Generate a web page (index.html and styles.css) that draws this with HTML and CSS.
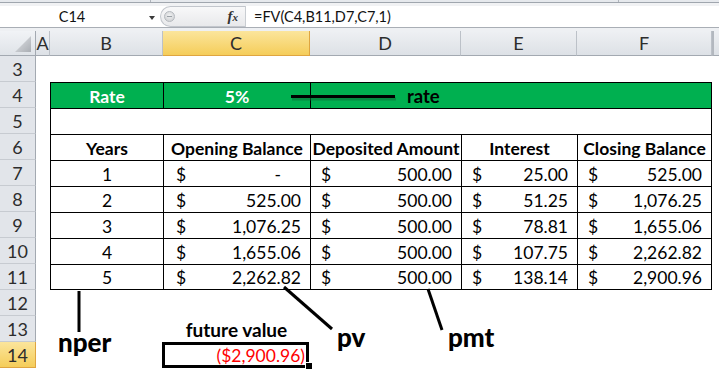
FILE: index.html
```html
<!DOCTYPE html>
<html>
<head>
<meta charset="utf-8">
<title>FV example</title>
<link rel="stylesheet" href="styles.css">
</head>
<body>
<div class="app">
  <div class="ribbon-edge"><div class="seg s1"></div><div class="seg s2"></div></div>
  <div class="formula-bar">
    <div class="name-box"><span class="name">C14</span><span class="dd"></span></div>
    <div class="fx-area"><span class="knob"><span class="dash"></span></span><span class="fx"><i>f</i><i class="fx-x">x</i></span></div>
    <div class="formula">=FV(C4,B11,D7,C7,1)</div>
  </div>
  <div class="bar-gap"></div>

  <div class="sheet">
    <div class="row">
      <div class="corner"><svg width="16" height="16" viewBox="0 0 16 16"><defs><linearGradient id="tg" x1="0" y1="0" x2="1" y2="1"><stop offset="0" stop-color="#e4e6e9"/><stop offset="1" stop-color="#a9adb3"/></linearGradient></defs><polygon points="16,0 16,16 0,16" fill="url(#tg)"/></svg></div>
      <div class="ch">A</div><div class="ch">B</div><div class="ch sel">C</div><div class="ch">D</div><div class="ch">E</div><div class="ch">F</div><div class="ch end"></div>
    </div>

    <div class="row"><div class="rh">3</div><div class="cell span7"></div></div>

    <div class="row">
      <div class="rh">4</div><div class="cell"></div>
      <div class="tb green ctr b white">Rate</div>
      <div class="tb green ctr b white">5%</div>
      <div class="tb last green lead b span3">rate</div>
      <div class="cell"></div>
    </div>

    <div class="row">
      <div class="rh">5</div><div class="cell"></div>
      <div class="tb last span5"></div>
      <div class="cell"></div>
    </div>

    <div class="row">
      <div class="rh">6</div><div class="cell"></div>
      <div class="tb ctr b">Years</div>
      <div class="tb ctr b">Opening Balance</div>
      <div class="tb ctr b">Deposited Amount</div>
      <div class="tb ctr b">Interest</div>
      <div class="tb last ctr b">Closing Balance</div>
      <div class="cell"></div>
    </div>

    <div class="row">
      <div class="rh">7</div><div class="cell"></div>
      <div class="tb ctr">1</div>
      <div class="tb acct col-c"><span>$</span><span class="dash-val">-</span></div>
      <div class="tb acct"><span>$</span><span>500.00</span></div>
      <div class="tb acct"><span>$</span><span>25.00</span></div>
      <div class="tb last acct"><span>$</span><span>525.00</span></div>
      <div class="cell"></div>
    </div>

    <div class="row">
      <div class="rh">8</div><div class="cell"></div>
      <div class="tb ctr">2</div>
      <div class="tb acct col-c"><span>$</span><span>525.00</span></div>
      <div class="tb acct"><span>$</span><span>500.00</span></div>
      <div class="tb acct"><span>$</span><span>51.25</span></div>
      <div class="tb last acct"><span>$</span><span>1,076.25</span></div>
      <div class="cell"></div>
    </div>

    <div class="row">
      <div class="rh">9</div><div class="cell"></div>
      <div class="tb ctr">3</div>
      <div class="tb acct col-c"><span>$</span><span>1,076.25</span></div>
      <div class="tb acct"><span>$</span><span>500.00</span></div>
      <div class="tb acct"><span>$</span><span>78.81</span></div>
      <div class="tb last acct"><span>$</span><span>1,655.06</span></div>
      <div class="cell"></div>
    </div>

    <div class="row">
      <div class="rh">10</div><div class="cell"></div>
      <div class="tb ctr">4</div>
      <div class="tb acct col-c"><span>$</span><span>1,655.06</span></div>
      <div class="tb acct"><span>$</span><span>500.00</span></div>
      <div class="tb acct"><span>$</span><span>107.75</span></div>
      <div class="tb last acct"><span>$</span><span>2,262.82</span></div>
      <div class="cell"></div>
    </div>

    <div class="row">
      <div class="rh">11</div><div class="cell"></div>
      <div class="tb bot ctr">5</div>
      <div class="tb bot acct col-c"><span>$</span><span>2,262.82</span></div>
      <div class="tb bot acct"><span>$</span><span>500.00</span></div>
      <div class="tb bot acct"><span>$</span><span>138.14</span></div>
      <div class="tb bot last acct"><span>$</span><span>2,900.96</span></div>
      <div class="cell"></div>
    </div>

    <div class="row"><div class="rh">12</div><div class="cell span7"></div></div>

    <div class="row">
      <div class="rh">13</div><div class="cell span2"></div>
      <div class="fv-label b">future value</div>
      <div class="cell span4"></div>
    </div>

    <div class="row">
      <div class="rh sel">14</div><div class="cell span2"></div>
      <div class="selcell">($2,900.96)</div>
      <div class="cell span4"></div>
    </div>
  </div>

  <svg class="overlay" width="719" height="375" viewBox="0 0 719 375">
    <line x1="292" y1="99" x2="396" y2="99" stroke="#0b6b34" stroke-opacity="0.55" stroke-width="3"/>
    <line x1="291" y1="96.5" x2="395" y2="96.5" stroke="#000" stroke-width="3"/>
    <line x1="79" y1="291" x2="79" y2="332" stroke="#000" stroke-width="3"/>
    <line x1="284" y1="287" x2="332" y2="329" stroke="#000" stroke-width="3"/>
    <line x1="428" y1="289" x2="442" y2="330" stroke="#000" stroke-width="3"/>
  </svg>
  <div class="note nper">nper</div>
  <div class="note pv">pv</div>
  <div class="note pmt">pmt</div>
</div>
</body>
</html>
```
FILE: styles.css
```css
* { box-sizing: border-box; margin: 0; padding: 0; }
html, body { width: 719px; height: 375px; overflow: hidden; background: #fff; }
body { font-family: Lato, "Liberation Sans", sans-serif; color: #000; }
.app { position: relative; width: 719px; height: 375px; }

/* ribbon remnant */
.ribbon-edge {
  display: flex; height: 6px;
  background: linear-gradient(#e6e9ed 0 2px, #a0a6ae 2px 3px, #f1f2f4 3px 6px);
}
.seg { height: 2px; border-right: 1px solid #b0b5bc; }
.s1 { width: 151px; }
.s2 { width: 468px; }

/* formula bar */
.formula-bar { display: flex; height: 22px; background: #fff; border-bottom: 1px solid #a9aeb5; }
.name-box { width: 158px; display: flex; align-items: center; font-size: 14.5px; color: #111; }
.name { width: 144px; text-align: center; }
.dd { width: 0; height: 0; margin-left: 5px; margin-top: 2px; border-left: 3.5px solid transparent; border-right: 3.5px solid transparent; border-top: 4px solid #3a3a3a; }
.fx-area {
  width: 85px; margin-left: 2px; display: flex; align-items: center;
  background: linear-gradient(#f8f8f9, #e8e9eb);
  border: 1px solid #c2c6cc; border-right: none; border-radius: 11px 0 0 11px;
}
.knob {
  width: 11px; height: 11px; margin-left: 3px; border-radius: 50%;
  background: radial-gradient(circle at 50% 40%, #f0f1f2, #c9cbce);
  border: 1px solid #b5b9be; display: flex; align-items: center; justify-content: center;
}
.dash { width: 5px; height: 1px; background: #9aa0a6; }
.fx { margin-left: auto; margin-right: 7px; font-family: "Liberation Serif", serif; font-weight: 700; font-size: 15px; color: #333; }
.fx-x { font-size: 11px; }
.formula { flex: 1; display: flex; align-items: center; padding-left: 8px; font-size: 14.5px; color: #111; border-left: 1px solid #c9cdd2; }
.bar-gap { height: 3px; background: #eef0f3; }

/* sheet grid */
.sheet {
  display: grid;
  grid-template-columns: 36px 14px 113px 147px 151px 116px 135px 1fr;
  grid-template-rows: 25px repeat(12, 26px);
  font-size: 17.5px;
}
.row { display: contents; }
.corner {
  background: linear-gradient(#f1f3f6, #dfe3e8);
  border-right: 1px solid #a3a9b1; border-bottom: 1px solid #a3a9b1;
  display: flex; justify-content: flex-end; align-items: flex-end; padding: 0 4px 3px 0;
}
.ch {
  background: linear-gradient(#eef0f3, #dde1e6);
  border-right: 1px solid #bcc1c8; border-bottom: 1px solid #a3a9b1;
  display: flex; align-items: center; justify-content: center; color: #2d2d2d; font-size: 18px;
}
.ch.end { border-left: 2px solid #b3b8bf; border-right: none; }
.rh {
  background: #e2e5ea; border-right: 1px solid #a3a9b1; border-bottom: 1px solid #c7cbd1;
  display: flex; align-items: center; justify-content: center; color: #2d2d2d; font-size: 18px;
}
.sel { background: linear-gradient(#fbe59c, #f5cd5a); border-right-color: #dfa540; border-bottom-color: #dfa540; }

.span2 { grid-column: span 2; }
.span3 { grid-column: span 3; }
.span4 { grid-column: span 4; }
.span5 { grid-column: span 5; }
.span7 { grid-column: span 7; }

.tb { border-left: 1px solid #000; border-top: 1px solid #000; }
.last { border-right: 1px solid #000; }
.bot { border-bottom: 1px solid #000; }
.green { background: #00b050; }
.white { color: #fff; }
.b { font-weight: 700; }
.ctr { display: flex; align-items: center; justify-content: center; padding-top: 1px; white-space: nowrap; }
.acct { display: flex; align-items: center; justify-content: space-between; padding: 1px 9px 0 10px; white-space: nowrap; }
.col-c { padding-left: 12px; }
.dash-val { margin-right: 20px; }
.lead { display: flex; align-items: center; padding-left: 96px; font-size: 18.5px; }

.fv-label {
  display: flex; align-items: flex-end; justify-content: center;
  font-size: 19px; line-height: 1; padding-bottom: 3px; white-space: nowrap;
}
.selcell {
  position: relative; display: flex; align-items: center; justify-content: flex-end;
  padding: 1px 5px 0 0; color: #ff0000;
}
.selcell::before {
  content: ""; position: absolute; left: -1px; right: 1px; top: 0; bottom: 0;
  border: 3px solid #000;
}
.selcell::after {
  content: ""; position: absolute; right: -3px; bottom: -2px; width: 6px; height: 6px;
  background: #000; border: 1px solid #fff;
}

/* annotations */
.overlay { position: absolute; left: 0; top: 0; pointer-events: none; }
.note { position: absolute; font-weight: 900; font-size: 26px; line-height: 1; color: #000; }
.nper { left: 58px; top: 329px; }
.pv { left: 337px; top: 324px; }
.pmt { left: 448px; top: 324px; }
```
